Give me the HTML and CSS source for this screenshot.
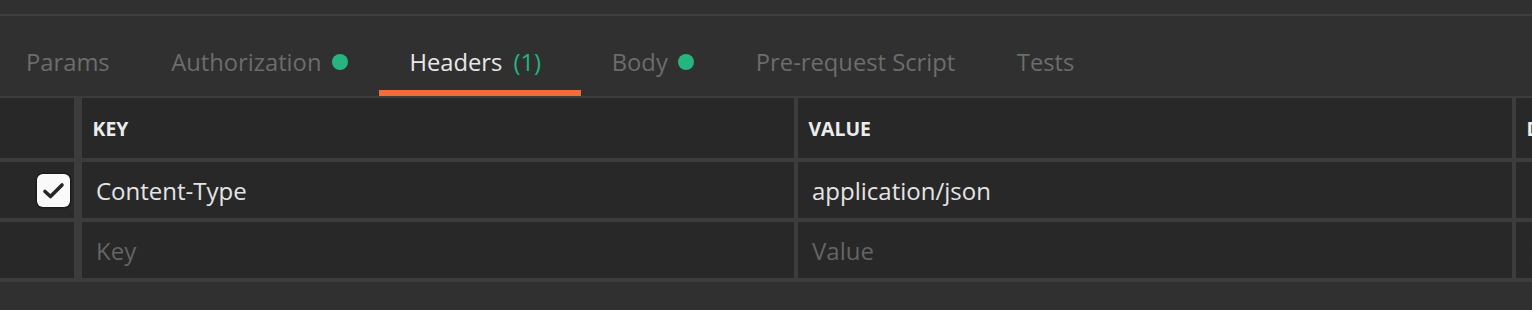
FILE: index.html
```html
<!DOCTYPE html>
<html>
<head>
<meta charset="utf-8">
<link rel="stylesheet" href="styles.css">
</head>
<body>
<div class="topbar"></div>
<nav class="tabs">
  <div class="tab first">Params</div>
  <div class="tab">Authorization<span class="dot"></span></div>
  <div class="tab active">Headers<span class="count">(1)</span></div>
  <div class="tab">Body<span class="dot"></span></div>
  <div class="tab">Pre-request Script</div>
  <div class="tab">Tests</div>
</nav>
<div class="grid">
  <div class="cell head chk"></div>
  <div class="cell head">KEY</div>
  <div class="cell head">VALUE</div>
  <div class="cell head">DESCRIPTION</div>

  <div class="cell chk">
    <span class="checkbox">
      <svg width="23" height="19" viewBox="0 0 23 19"><path d="M3 10.5 L8.5 15.5 L20 4" fill="none" stroke="#262626" stroke-width="3.6" stroke-linecap="round" stroke-linejoin="round"/></svg>
    </span>
  </div>
  <div class="cell body">Content-Type</div>
  <div class="cell body">application/json</div>
  <div class="cell body"></div>

  <div class="cell chk"></div>
  <div class="cell body ph">Key</div>
  <div class="cell body ph">Value</div>
  <div class="cell body ph">Description</div>
</div>
</body>
</html>
```
FILE: styles.css
```css
html, body {
  margin: 0;
  padding: 0;
  background: #303030;
  overflow: hidden;
}
body {
  font-family: "Open Sans", "Liberation Sans", sans-serif;
  width: 1532px;
  height: 310px;
}
.topbar {
  height: 14px;
  border-bottom: 2px solid #3e3e3e;
}
.tabs {
  display: flex;
  height: 80px;
  border-bottom: 2px solid #3c3c3c;
}
.tab {
  display: flex;
  align-items: center;
  height: 80px;
  box-sizing: border-box;
  padding: 30px 30.75px 18px;
  font-size: 23.75px;
  line-height: 32px;
  color: #6c6c6c;
  white-space: nowrap;
}
.tab.first {
  padding-left: 26px;
}
.tab.active {
  color: #e8e8e8;
  padding-bottom: 12px;
  padding-right: 40px;
  border-bottom: 6px solid #f26b3a;
}
.count {
  color: #26b47f;
  margin-left: 11px;
}
.dot {
  width: 16px;
  height: 16px;
  border-radius: 50%;
  background: #26b47f;
  margin-left: 10.5px;
}
.grid {
  display: grid;
  grid-template-columns: 78px 712px 714px 1fr;
  grid-template-rows: 60px 56px 56px;
  column-gap: 4px;
  row-gap: 4px;
  background: #3c3c3c;
  padding-bottom: 4px;
}
.cell {
  background: #282828;
  display: flex;
  align-items: center;
  overflow: hidden;
  white-space: nowrap;
  min-width: 0;
}
.cell.chk {
  border-right: 4px solid #3c3c3c;
  justify-content: flex-end;
  padding-right: 4px;
}
.head {
  font-weight: 700;
  font-size: 19.4px;
  color: #ececec;
  padding-left: 10.5px;
  padding-top: 1px;
}
.head.chk {
  padding-left: 0;
}
.body {
  font-size: 24px;
  color: #e4e4e4;
  padding-left: 14px;
}
.ph {
  color: #646464;
}
.checkbox {
  width: 33px;
  height: 33px;
  box-sizing: border-box;
  border-radius: 6px;
  background: #fafafa;
  box-shadow: 0 0 0 1.5px #1c1c1c;
  display: flex;
  align-items: center;
  justify-content: center;
}
```
